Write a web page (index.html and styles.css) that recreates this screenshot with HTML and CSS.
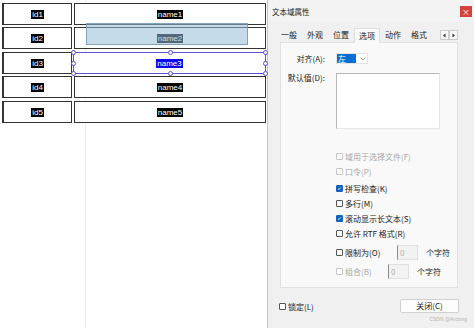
FILE: index.html
```html
<!DOCTYPE html>
<html lang="zh-CN">
<head>
    <meta charset="UTF-8">
    <title>文本域属性</title>
    <link rel="stylesheet" href="styles.css">
</head>
<body>
    <div class="screen">
        <!-- 表单画布 -->
        <div class="canvas">
            <div class="grid">
                <div class="row">
                    <div class="cell cell-id"><span class="chip">id1</span></div>
                    <div class="cell cell-name"><span class="chip">name1</span></div>
                </div>
                <div class="row">
                    <div class="cell cell-id"><span class="chip">id2</span></div>
                    <div class="cell cell-name"><span class="chip">name2</span></div>
                </div>
                <div class="row">
                    <div class="cell cell-id"><span class="chip">id3</span></div>
                    <div class="cell cell-name selected">
                        <span class="chip chip-sel">name3</span>
                        <i class="handle h-tl"></i><i class="handle h-tc"></i><i class="handle h-tr"></i>
                        <i class="handle h-ml"></i><i class="handle h-mr"></i>
                        <i class="handle h-bl"></i><i class="handle h-bc"></i><i class="handle h-br"></i>
                    </div>
                </div>
                <div class="row">
                    <div class="cell cell-id"><span class="chip">id4</span></div>
                    <div class="cell cell-name"><span class="chip">name4</span></div>
                </div>
                <div class="row">
                    <div class="cell cell-id"><span class="chip">id5</span></div>
                    <div class="cell cell-name"><span class="chip">name5</span></div>
                </div>
            </div>
            <div class="marquee"></div>
        </div>

        <!-- 属性对话框 -->
        <div class="dialog">
            <div class="titlebar">
                <span class="title">文本域属性</span>
                <span class="close-x">×</span>
            </div>

            <div class="tabs">
                <span class="tab">一般</span>
                <span class="tab">外观</span>
                <span class="tab">位置</span>
                <span class="tab active">选项</span>
                <span class="tab">动作</span>
                <span class="tab">格式</span>
                <span class="tab-arrows">
                    <span class="arrow"><svg width="5" height="5" viewBox="0 0 5 5"><polygon points="3.5,0.5 1,2.5 3.5,4.5" fill="#333"/></svg></span>
                    <span class="arrow"><svg width="5" height="5" viewBox="0 0 5 5"><polygon points="1.5,0.5 4,2.5 1.5,4.5" fill="#333"/></svg></span>
                </span>
            </div>

            <div class="panel">
                <div class="field">
                    <span class="label">对齐(A):</span>
                    <span class="select">
                        <span class="select-val">左</span>
                        <svg class="caret" width="6" height="4" viewBox="0 0 6 4"><polyline points="0.5,0.5 3,3 5.5,0.5" fill="none" stroke="#888" stroke-width="0.8"/></svg>
                    </span>
                </div>
                <div class="field field-top">
                    <span class="label">默认值(D):</span>
                    <span class="textarea"></span>
                </div>

                <div class="options">
                    <div class="opt disabled"><span class="box"></span>域用于选择文件(F)</div>
                    <div class="opt disabled"><span class="box"></span>口令(P)</div>
                    <div class="opt gap"><span class="box checked"><svg width="7" height="7" viewBox="0 0 7 7"><polyline points="1.3,3.6 2.9,5 5.7,1.8" fill="none" stroke="#fff" stroke-width="1.1"/></svg></span>拼写检查(K)</div>
                    <div class="opt"><span class="box"></span>多行(M)</div>
                    <div class="opt"><span class="box checked"><svg width="7" height="7" viewBox="0 0 7 7"><polyline points="1.3,3.6 2.9,5 5.7,1.8" fill="none" stroke="#fff" stroke-width="1.1"/></svg></span>滚动显示长文本(S)</div>
                    <div class="opt"><span class="box"></span>允许 RTF 格式(R)</div>
                    <div class="opt opt-limit">
                        <span class="opt-label"><span class="box"></span>限制为(O)</span>
                        <span class="num">0</span>
                        <span class="unit">个字符</span>
                    </div>
                    <div class="opt opt-comb disabled">
                        <span class="opt-label"><span class="box"></span>组合(B)</span>
                        <span class="num">0</span>
                        <span class="unit">个字符</span>
                    </div>
                </div>
            </div>

            <div class="footer">
                <span class="opt lock"><span class="box"></span>锁定(L)</span>
                <span class="btn-close">关闭(C)</span>
            </div>
            <div class="watermark">CSDN @Arclong</div>
        </div>
    </div>
</body>
</html>
```

FILE: styles.css
```css
body {
    margin: 0;
    font-family: "Noto Sans CJK SC", "Liberation Sans", sans-serif;
    background-color: #ffffff;
}

.screen {
    display: flex;
    width: 474px;
    height: 328px;
    overflow: hidden;
}

/* 画布 */
.canvas {
    position: relative;
    flex: none;
    width: 267px;
    padding: 3px 0 0 2px;
    box-sizing: border-box;
    background: linear-gradient(to right, #fff 85px, #ececec 85px, #ececec 86px, #fff 86px);
}

.grid {
    display: flex;
    flex-direction: column;
    gap: 2px;
}

.row {
    display: flex;
    gap: 2px;
    height: 22px;
}

.row:nth-child(2n) {
    margin-bottom: 1px;
}

.cell {
    display: flex;
    align-items: center;
    justify-content: center;
    box-sizing: border-box;
    border: 1px solid #333;
    background-color: #fff;
}

.cell-id {
    width: 70px;
    border-left-width: 2px;
}

.cell-name {
    width: 192px;
}

.chip {
    background-color: #000;
    color: #fff;
    font-family: "Liberation Sans", sans-serif;
    font-size: 8px;
    line-height: 9px;
    padding: 0 1px;
}

.chip-sel {
    background-color: #0a0aee;
}

.selected {
    position: relative;
    margin-left: -1px;
    width: 193px;
    border-color: #5a4fd6;
}

.handle {
    position: absolute;
    width: 3px;
    height: 3px;
    border: 1px solid #5a4fd6;
    border-radius: 50%;
    background-color: #fff;
}

.h-tl { left: -3px; top: -3px; }
.h-tc { left: 94px; top: -3px; }
.h-tr { right: -3px; top: -3px; }
.h-ml { left: -3px; top: 8px; }
.h-mr { right: -3px; top: 8px; }
.h-bl { left: -3px; bottom: -3px; }
.h-bc { left: 94px; bottom: -3px; }
.h-br { right: -3px; bottom: -3px; }

.marquee {
    position: absolute;
    left: 86px;
    top: 23px;
    width: 162px;
    height: 22px;
    box-sizing: border-box;
    background-color: rgba(150, 190, 215, 0.55);
    border: 1px solid rgba(110, 150, 180, 0.8);
}

/* 对话框 */
.dialog {
    flex: none;
    width: 207px;
    display: flex;
    flex-direction: column;
    background-color: #f0f0f0;
    border-left: 1px solid #c4c4c4;
    box-sizing: border-box;
    font-size: 8px;
    color: #222;
}

.titlebar {
    display: flex;
    align-items: center;
    justify-content: space-between;
    height: 22px;
    padding-left: 4px;
    background-color: #f3f3f3;
}

.title {
    font-size: 7.5px;
}

.close-x {
    width: 12px;
    height: 11px;
    margin-right: 2px;
    background-color: #d8403b;
    color: #fff;
    font-size: 8px;
    line-height: 11px;
    text-align: center;
}

.tabs {
    display: flex;
    align-items: flex-end;
    height: 14px;
    margin-top: 6px;
    padding-left: 8px;
}

.tab {
    width: 26px;
    height: 14px;
    line-height: 14px;
    text-align: center;
    box-sizing: border-box;
}

.tab.active {
    background-color: #f9f9f9;
    border: 1px solid #dedede;
    border-bottom: none;
    height: 15px;
    line-height: 13px;
    margin-bottom: -1px;
    position: relative;
    z-index: 1;
}

.tab-arrows {
    display: flex;
    margin-left: auto;
    margin-right: 16px;
    margin-bottom: 2px;
}

.arrow {
    display: flex;
    align-items: center;
    justify-content: center;
    width: 9px;
    height: 10px;
    box-sizing: border-box;
    border: 1px solid #cdcdcd;
    background-color: #f7f7f7;
}

.panel {
    height: 246px;
    margin: 0 16px 0 12px;
    box-sizing: border-box;
    border: 1px solid #e0e0e0;
    background-color: #f9f9f9;
    padding-top: 10px;
}

.field {
    display: flex;
    align-items: center;
}

.field-top {
    align-items: flex-start;
    margin-top: 9px;
}

.label {
    width: 44px;
    text-align: right;
    margin-right: 11px;
    line-height: 10px;
}

.select {
    display: flex;
    align-items: center;
    width: 32px;
    height: 11px;
    box-sizing: border-box;
    border: 1px solid #e4e4e4;
    background-color: #fff;
}

.select-val {
    width: 19px;
    height: 9px;
    line-height: 9px;
    background-color: #0a6fd1;
    color: #fff;
    padding-left: 1px;
    box-sizing: border-box;
}

.caret {
    margin-left: 4px;
}

.textarea {
    width: 104px;
    height: 56px;
    box-sizing: border-box;
    border: 1px solid #b8b8b8;
    border-right-color: #e6e6e6;
    border-bottom-color: #e6e6e6;
    background-color: #fff;
}

.options {
    display: flex;
    flex-direction: column;
    margin-top: 20px;
    padding-left: 55px;
}

.opt {
    display: flex;
    align-items: center;
    height: 15px;
    color: #222;
}

.opt.gap {
    margin-top: 2px;
}

.opt.disabled {
    color: #a8a8a8;
}

.box {
    display: flex;
    align-items: center;
    justify-content: center;
    width: 7px;
    height: 7px;
    margin-right: 2px;
    box-sizing: border-box;
    border: 1px solid #555;
    background-color: #fff;
    border-radius: 1px;
}

.disabled .box {
    border-color: #c4c4c4;
}

.box.checked {
    background-color: #1160c0;
    border-color: #1160c0;
}

.opt-limit {
    height: 16px;
    margin-top: 3px;
}

.opt-comb {
    height: 15px;
    margin-top: 4px;
}

.opt-label {
    display: flex;
    align-items: center;
}

.opt-limit .opt-label { width: 61px; }
.opt-comb .opt-label { width: 52px; }

.num {
    width: 21px;
    height: 15px;
    line-height: 13px;
    box-sizing: border-box;
    border: 1px solid #e0e0e0;
    border-left: 1px solid #8a8a8a;
    background-color: #f2f2f2;
    color: #b0b0b0;
    padding-left: 2px;
}

.unit {
    margin-left: 8px;
    color: #222;
}

.footer {
    display: flex;
    align-items: center;
    justify-content: space-between;
    margin-top: 11px;
    padding-left: 11px;
    padding-right: 15px;
}

.lock {
    height: 14px;
}

.btn-close {
    width: 59px;
    height: 14px;
    line-height: 12px;
    text-align: center;
    box-sizing: border-box;
    border: 1px solid #d0d0d0;
    border-radius: 2px;
    background-color: #fdfdfd;
}

.watermark {
    margin-top: 3px;
    margin-right: 7px;
    text-align: right;
    font-family: "Liberation Sans", sans-serif;
    font-size: 5px;
    color: #b4b4b4;
}
```
